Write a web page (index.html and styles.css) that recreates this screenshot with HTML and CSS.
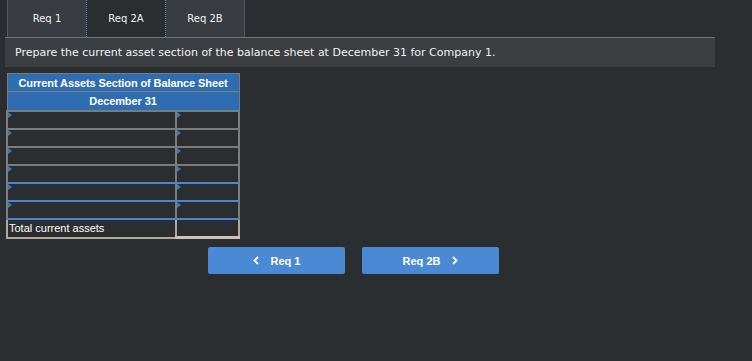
FILE: index.html
```html
<!DOCTYPE html>
<html>

<head>
    <title>Req 2A</title>
    <meta name="viewport" content="width=device-width, initial-scale=1">
    <link rel="stylesheet" href="styles.css">
</head>

<body>
    <div class="tabs">
        <div class="tab">Req 1</div>
        <div class="tab active">Req 2A</div>
        <div class="tab last">Req 2B</div>
    </div>

    <div class="panel">
        Prepare the current asset section of the balance sheet at December 31 for Company 1.
    </div>

    <table class="sheet">
        <tr>
            <th colspan="2" class="head">Current Assets Section of Balance Sheet</th>
        </tr>
        <tr>
            <th colspan="2" class="head sub">December 31</th>
        </tr>
        <tr>
            <td class="label"><span class="mark"></span></td>
            <td class="amount"><span class="mark"></span></td>
        </tr>
        <tr>
            <td class="label"><span class="mark"></span></td>
            <td class="amount"><span class="mark"></span></td>
        </tr>
        <tr>
            <td class="label"><span class="mark"></span></td>
            <td class="amount"><span class="mark"></span></td>
        </tr>
        <tr class="blue">
            <td class="label"><span class="mark"></span></td>
            <td class="amount"><span class="mark"></span></td>
        </tr>
        <tr class="blue">
            <td class="label"><span class="mark"></span></td>
            <td class="amount"><span class="mark"></span></td>
        </tr>
        <tr class="blue">
            <td class="label"><span class="mark"></span></td>
            <td class="amount"><span class="mark"></span></td>
        </tr>
        <tr class="total">
            <td class="label">Total current assets</td>
            <td class="amount"></td>
        </tr>
    </table>

    <div class="nav">
        <button class="navbtn">
            <svg class="chev" width="6" height="9" viewBox="0 0 6 9"><path d="M5 1 L1.5 4.5 L5 8" fill="none" stroke="#fff" stroke-width="1.8"/></svg>
            Req 1
        </button>
        <button class="navbtn">
            Req 2B
            <svg class="chev" width="6" height="9" viewBox="0 0 6 9"><path d="M1 1 L4.5 4.5 L1 8" fill="none" stroke="#fff" stroke-width="1.8"/></svg>
        </button>
    </div>
</body>

</html>
```

FILE: styles.css
```css
body {
    margin: 0;
    background-color: #2b2e30;
    color: #ffffff;
    font-family: "DejaVu Sans", Verdana, sans-serif;
}

.tabs {
    display: flex;
    height: 37px;
    padding-left: 7px;
}

.tab {
    width: 78px;
    background-color: #393c40;
    border-left: 1px solid #55595d;
    font-size: 10px;
    line-height: 37px;
    text-align: center;
    color: #f2f2f2;
}

.tab.active {
    background-color: #2b2e30;
    border-left: 1px dotted #6d8bb0;
    border-right: 1px dotted #6d8bb0;
}

.tab.last {
    border-left: 0;
    border-right: 1px solid #55595d;
}

.panel {
    width: 700px;
    height: 29px;
    margin-left: 5px;
    padding-left: 10px;
    background-color: #3b3f42;
    border-top: 1px solid #707476;
    font-size: 11px;
    line-height: 29px;
    color: #f2f2f2;
}

.sheet {
    margin: 6px 0 0 6px;
    width: 234px;
    border-collapse: collapse;
    border: 1px solid #7c7c7c;
    font-family: "Liberation Sans", Arial, sans-serif;
}

.head {
    height: 17px;
    padding: 0;
    background-color: #2f6db3;
    border-bottom: 1px solid #7c7c7c;
    font-size: 11px;
    font-weight: bold;
    letter-spacing: -0.1px;
}

.sub {
    height: 18px;
}

td {
    height: 16px;
    padding: 0;
    border: 2px solid #7c7c7c;
    background-color: #2b2e30;
    vertical-align: top;
}

.label {
    width: 166px;
}

.blue td {
    border-top-color: #4c86cc;
    border-bottom-color: #4c86cc;
}

.mark {
    display: block;
    width: 0;
    height: 0;
    border-top: 3px solid transparent;
    border-bottom: 3px solid transparent;
    border-left: 4px solid #3b78c4;
}

.total td {
    height: 16px;
    border-color: #b3a896;
    font-size: 11px;
    vertical-align: middle;
    padding-left: 1px;
}

.total .amount {
    border-bottom-width: 3px;
    border-bottom-color: #cfc4b3;
}

.nav {
    display: flex;
    gap: 17px;
    margin: 8px 0 0 208px;
}

.navbtn {
    display: flex;
    align-items: center;
    justify-content: center;
    gap: 12px;
    width: 137px;
    height: 27px;
    border: 0;
    border-radius: 2px;
    background-color: #4a8ad4;
    color: #ffffff;
    font-family: "Liberation Sans", Arial, sans-serif;
    font-size: 11px;
    font-weight: bold;
}
```
